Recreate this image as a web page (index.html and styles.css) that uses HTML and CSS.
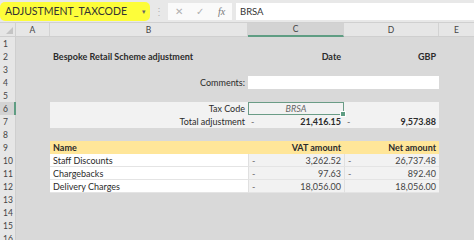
FILE: index.html
```html
<!DOCTYPE html>
<html lang="en">
<head>
  <meta charset="UTF-8">
  <title>BRSA adjustment</title>
  <link rel="stylesheet" href="styles.css">
</head>
<body>
  <div class="topbar">
    <div class="namebox">
      <span>ADJUSTMENT_TAXCODE</span>
      <span class="caret">&#9662;</span>
    </div>
    <div class="grip">&#8942;</div>
    <div class="tools">
      <span class="tool">&#10005;</span>
      <span class="tool">&#10003;</span>
      <span class="tool fx">fx</span>
    </div>
    <div class="formula">BRSA</div>
  </div>

  <div class="sheet">
    <div class="row head">
      <div class="corner"><span class="tri"></span></div>
      <div class="colhead">A</div>
      <div class="colhead">B</div>
      <div class="colhead sel">C</div>
      <div class="colhead">D</div>
      <div class="colhead last">E</div>
    </div>

    <div class="row"><div class="rh">1</div></div>
    <div class="row">
      <div class="rh">2</div><div></div>
      <div class="cell bold">Bespoke Retail Scheme adjustment</div>
      <div class="cell bold right">Date</div>
      <div class="cell bold right">GBP</div>
    </div>
    <div class="row"><div class="rh">3</div></div>
    <div class="row">
      <div class="rh">4</div><div></div>
      <div class="cell right">Comments:</div>
      <div class="cell input span2"></div>
    </div>
    <div class="row"><div class="rh">5</div></div>
    <div class="row">
      <div class="rh sel">6</div><div></div>
      <div class="cell soft right">Tax Code</div>
      <div class="cell soft active">BRSA<span class="handle"></span></div>
      <div class="cell soft"></div>
    </div>
    <div class="row">
      <div class="rh">7</div><div></div>
      <div class="cell soft right">Total adjustment</div>
      <div class="cell soft acct bold"><span class="dash">-</span><span>21,416.15</span></div>
      <div class="cell soft acct bold"><span class="dash">-</span><span>9,573.88</span></div>
    </div>
    <div class="row"><div class="rh">8</div></div>
    <div class="row">
      <div class="rh">9</div><div></div>
      <div class="cell th bold">Name</div>
      <div class="cell th bold right">VAT amount</div>
      <div class="cell th bold right">Net amount</div>
    </div>
    <div class="row">
      <div class="rh">10</div><div></div>
      <div class="cell td">Staff Discounts</div>
      <div class="cell td num acct"><span class="dash">-</span><span>3,262.52</span></div>
      <div class="cell td num acct"><span class="dash">-</span><span>26,737.48</span></div>
    </div>
    <div class="row">
      <div class="rh">11</div><div></div>
      <div class="cell td">Chargebacks</div>
      <div class="cell td num acct"><span class="dash">-</span><span>97.63</span></div>
      <div class="cell td num acct"><span class="dash">-</span><span>892.40</span></div>
    </div>
    <div class="row">
      <div class="rh">12</div><div></div>
      <div class="cell td">Delivery Charges</div>
      <div class="cell td num acct"><span class="dash">-</span><span>18,056.00</span></div>
      <div class="cell td num acct"><span></span><span>18,056.00</span></div>
    </div>
    <div class="row"><div class="rh">13</div></div>
    <div class="row"><div class="rh">14</div></div>
    <div class="row"><div class="rh">15</div></div>
    <div class="row"><div class="rh">16</div></div>
  </div>
</body>
</html>
```

FILE: styles.css
```css
body {
  margin: 0;
  background: #d9d9d9;
  font-family: Lato, 'Noto Sans', sans-serif;
  color: #2b2b2b;
  overflow: hidden;
}

/* formula bar */
.topbar {
  height: 22px;
  display: flex;
  align-items: center;
  background: #e8e8e8;
}

.namebox {
  width: 150px;
  height: 19px;
  padding: 0 4px 0 5px;
  box-sizing: border-box;
  display: flex;
  align-items: center;
  justify-content: space-between;
  background: #fdfd3a;
  border-radius: 5px;
  font-size: 10.5px;
  color: #333;
}

.caret {
  font-size: 7px;
  color: #666;
}

.grip {
  width: 18px;
  text-align: center;
  font-size: 10px;
  color: #b5b5b5;
}

.tools {
  width: 64px;
  height: 17px;
  display: flex;
  align-items: center;
  justify-content: space-around;
  background: #fafafa;
  color: #b0b0b0;
  font-size: 10px;
}

.fx {
  font-family: 'Liberation Serif', serif;
  font-style: italic;
  color: #777;
}

.formula {
  flex: 1;
  height: 17px;
  margin-left: 4px;
  padding-left: 4px;
  display: flex;
  align-items: center;
  background: #fff;
  font-size: 9.5px;
  color: #333;
}

/* grid */
.row {
  display: grid;
  grid-template-columns: 16px 34px 198px 96px 95px 1fr;
  height: 13px;
}

.row.head {
  height: 15px;
  background: #e6e6e6;
  border-top: 1px solid #d0d0d0;
  border-bottom: 1px solid #cfcfcf;
  box-sizing: border-box;
}

.corner {
  position: relative;
  border-right: 1px solid #d0d0d0;
}

.tri {
  position: absolute;
  right: 2px;
  bottom: 2px;
  border-left: 7px solid transparent;
  border-bottom: 7px solid #c4c4c4;
}

.colhead {
  display: flex;
  align-items: center;
  justify-content: center;
  border-right: 1px solid #d3d3d3;
  font-size: 8.5px;
  color: #444;
}

.colhead.sel {
  background: #d3d3d3;
  border-bottom: 2px solid #5f9d83;
  margin-bottom: -1px;
}

.colhead.last {
  border-right: none;
}

.rh {
  grid-column: 1;
  background: #e6e6e6;
  border-right: 1px solid #cfcfcf;
  display: flex;
  align-items: center;
  padding-left: 3px;
  font-size: 8.5px;
  color: #444;
}

.rh.sel {
  background: #d3d3d3;
  border-right: 2px solid #5f9d83;
}

.cell {
  display: flex;
  align-items: center;
  padding: 0 3px;
  font-size: 9px;
  white-space: nowrap;
}

.right {
  justify-content: flex-end;
}

.bold {
  font-weight: bold;
}

.span2 {
  grid-column: 4 / span 2;
}

.input {
  background: #fff;
}

.soft {
  background: #f2f2f2;
}

.active {
  justify-content: center;
  font-style: italic;
  color: #666;
  border: 1px solid #6a9c86;
  box-sizing: border-box;
  position: relative;
}

.handle {
  position: absolute;
  right: -3px;
  bottom: -3px;
  width: 4px;
  height: 4px;
  background: #5f9d83;
  border: 1px solid #fff;
}

.acct {
  justify-content: space-between;
}

.th {
  background: #ffe699;
}

.td {
  background: #fff;
  border-bottom: 1px solid #e4e4e4;
}

.td.num {
  background: #f2f2f2;
  border-left: 1px solid #e0e0e0;
  color: #444;
}

.dash {
  color: #666;
  font-weight: normal;
}
```
